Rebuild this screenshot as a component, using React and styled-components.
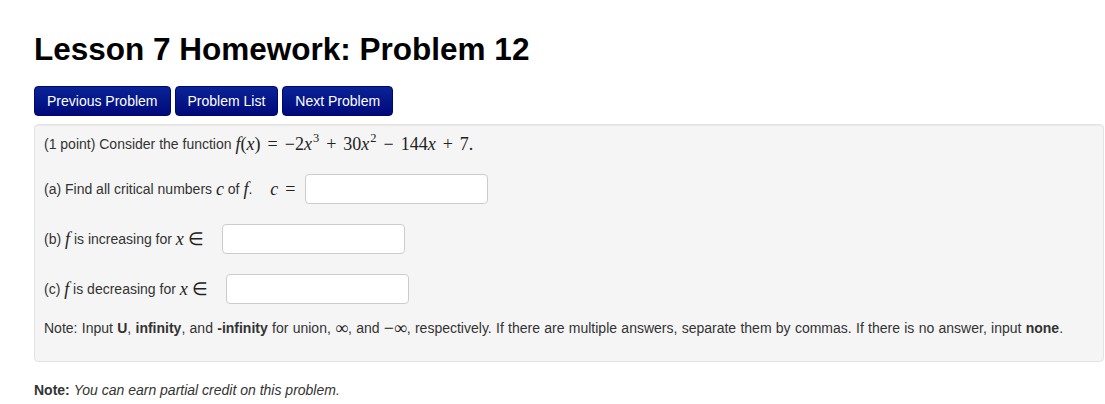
import React from "react";
import styled, { createGlobalStyle } from "styled-components";

const Global = createGlobalStyle`
  html, body { margin: 0; padding: 0; background: #fff; }
  body { font-family: "Liberation Sans", Arial, sans-serif; font-size: 14px; color: #333; }
`;

const Page = styled.div`
  padding: 32px 1px 0 34px;
`;

const Title = styled.h1`
  margin: 0;
  font-family: "Liberation Sans", Arial, sans-serif;
  font-weight: bold;
  font-size: 31.5px;
  line-height: 34px;
  color: #000;
`;

const Nav = styled.div`
  display: flex;
  gap: 4px;
  margin-top: 20px;
`;

const NavButton = styled.button`
  height: 30px;
  padding: 0 12px;
  border: 1px solid #00086a;
  border-radius: 4px;
  background: linear-gradient(#0a2396, #00097a);
  color: #fff;
  font-family: "Liberation Sans", Arial, sans-serif;
  font-size: 14px;
  line-height: 20px;
  cursor: pointer;
`;

const Well = styled.div`
  margin-top: 8px;
  padding: 9px 9px 23px;
  background: #f5f5f5;
  border: 1px solid #e3e3e3;
  border-radius: 4px;
  box-shadow: inset 0 1px 1px rgba(0, 0, 0, 0.05);
`;

const Line = styled.div`
  display: flex;
  align-items: center;
  line-height: 20px;
  min-height: ${(p) => (p.$field ? "30px" : "20px")};
  margin-top: ${(p) => p.$gap || 0}px;
  word-spacing: ${(p) => p.$ws || 0}px;
  white-space: pre;
`;

const Math = styled.span`
  font-family: "Liberation Serif", "Times New Roman", serif;
  font-size: 18px;
  color: #222;
  word-spacing: 0;
  margin: 0 ${(p) => p.$r ?? p.$pad ?? 2}px 0 ${(p) => p.$pad ?? 2}px;
`;

const V = styled.i`
  font-style: italic;
`;

const Op = styled.span`
  margin: 0 ${(p) => p.$sp ?? 5}px;
`;

const Sup = styled.sup`
  font-size: 12.5px;
  line-height: 0;
  vertical-align: 8px;
  margin-left: 1px;
`;

const Field = styled.input`
  box-sizing: border-box;
  width: 183px;
  height: 30px;
  margin-left: ${(p) => p.$ml ?? 6}px;
  padding: 4px 6px;
  border: 1px solid #ccc;
  border-radius: 4px;
  background: #fff;
  font-family: "Liberation Sans", Arial, sans-serif;
  font-size: 14px;
  outline: none;
`;

const Footer = styled.p`
  margin: 18px 0 0;
  line-height: 20px;
  color: #333;
`;

const Em = styled.i`
  font-style: italic;
`;

export default function App() {
  return (
    <>
      <Global />
      <Page>
        <Title>Lesson 7 Homework: Problem 12</Title>
        <Nav>
          <NavButton>Previous Problem</NavButton>
          <NavButton>Problem List</NavButton>
          <NavButton>Next Problem</NavButton>
        </Nav>
        <Well>
          <Line>
            (1 point) Consider the function
            <Math $pad={4}>
              <V>f</V>(<V>x</V>)<Op $sp={7}>=</Op>−2<V>x</V>
              <Sup>3</Sup>
              <Op $sp={7}>+</Op>30<V>x</V>
              <Sup>2</Sup>
              <Op $sp={7}>−</Op>144<V>x</V>
              <Op $sp={7}>+</Op>7.
            </Math>
          </Line>
          <Line $field $gap={20}>
            (a) Find all critical numbers <Math $pad={0}><V>c</V></Math> of <Math $pad={0}><V>f</V></Math>.
            <Math $pad={18} $r={0}>
              <V>c</V>
              <Op $sp={7}>=</Op>
            </Math>
            <Field $ml={3} />
          </Line>
          <Line $field $gap={20}>
            (b) <Math $pad={0}><V>f</V></Math> is increasing for <Math $pad={0}><V>x</V><Op $sp={4}>∈</Op></Math>
            <Field $ml={14} />
          </Line>
          <Line $field $gap={20}>
            (c) <Math $pad={0}><V>f</V></Math> is decreasing for <Math $pad={0}><V>x</V><Op $sp={4}>∈</Op></Math>
            <Field $ml={14} />
          </Line>
          <Line $gap={14} $ws={0.4}>
            Note: Input <b>U</b>, <b>infinity</b>, and <b>-infinity</b> for union, <Math $pad={0}>∞</Math>, and <Math $pad={0}>−∞</Math>, respectively. If there are multiple answers, separate them by commas. If there is no answer, input <b>none</b>.
          </Line>
        </Well>
        <Footer>
          <b>Note:</b> <Em>You can earn partial credit on this problem.</Em>
        </Footer>
      </Page>
    </>
  );
}
